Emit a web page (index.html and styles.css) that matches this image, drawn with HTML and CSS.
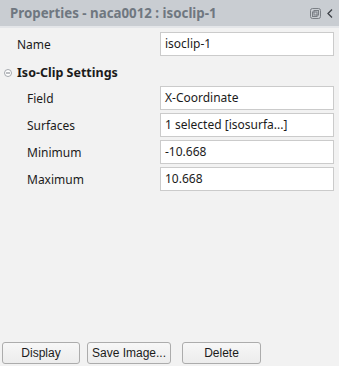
FILE: index.html
```html
<!DOCTYPE html>
<html lang="en">
<head>
  <meta charset="UTF-8" />
  <title>Properties - naca0012 : isoclip-1</title>
  <link rel="stylesheet" href="styles.css">
</head>
<body>
  <div class="panel">
    <!-- 헤더 -->
    <div class="panel-header">
      <span class="panel-title">Properties - naca0012 : isoclip-1</span>
      <span class="header-icons">
        <svg width="11" height="11" viewBox="0 0 11 11">
          <rect x="0.5" y="0.5" width="10" height="10" rx="2" fill="none" stroke="#7a7f85"/>
          <rect x="4" y="2.5" width="4.5" height="4.5" fill="none" stroke="#7a7f85"/>
          <rect x="2.5" y="4" width="4.5" height="4.5" fill="none" stroke="#7a7f85"/>
        </svg>
        <svg width="6" height="9" viewBox="0 0 6 9">
          <path d="M5 0.5 L1 4.5 L5 8.5" fill="none" stroke="#3c4046" stroke-width="1.3"/>
        </svg>
      </span>
    </div>

    <!-- 속성 목록 -->
    <div class="props">
      <div class="row">
        <span class="label">Name</span>
        <div class="value">isoclip-1</div>
      </div>

      <div class="group">
        <svg class="group-toggle" width="8" height="8" viewBox="0 0 8 8">
          <circle cx="4" cy="4" r="3.5" fill="#fff" stroke="#a4a8ad"/>
          <path d="M2 4 H6" stroke="#7a7f85"/>
        </svg>
        <span>Iso-Clip Settings</span>
      </div>

      <div class="row sub">
        <span class="label">Field</span>
        <div class="value">X-Coordinate</div>
      </div>
      <div class="row sub">
        <span class="label">Surfaces</span>
        <div class="value">1 selected [isosurfa...]</div>
      </div>
      <div class="row sub">
        <span class="label">Minimum</span>
        <div class="value">-10.668</div>
      </div>
      <div class="row sub">
        <span class="label">Maximum</span>
        <div class="value">10.668</div>
      </div>
    </div>

    <!-- 하단 버튼 -->
    <div class="actions">
      <button class="btn btn-display">Display</button>
      <button class="btn btn-save">Save Image...</button>
      <button class="btn btn-delete">Delete</button>
    </div>
  </div>
</body>
</html>
```

FILE: styles.css
```css
/* ---------- 기본 ---------- */
body {
  margin: 0;
  font-family: 'Noto Sans', 'Open Sans', sans-serif;
  font-size: 12px;
  color: #1b1b1b;
  background: #f2f2f2;
}

.panel {
  width: 339px;
  height: 366px;
  display: flex;
  flex-direction: column;
  background: #f2f2f2;
}

/* ---------- 헤더 ---------- */
.panel-header {
  height: 26px;
  background: #c9cdd2;
  border-bottom: 2px solid #e4e6e9;
  display: flex;
  align-items: center;
  justify-content: space-between;
  padding: 0 6px 0 10px;
}

.panel-title {
  font-weight: bold;
  font-size: 13.3px;
  color: #6f7780;
}

.header-icons {
  display: flex;
  align-items: center;
  gap: 6px;
}

/* ---------- 속성 ---------- */
.props {
  flex: 1;
  padding-top: 4px;
}

.row {
  display: flex;
  align-items: center;
  height: 24px;
  margin-bottom: 3px;
  padding-left: 17px;
}

.row.sub {
  padding-left: 27px;
}

.label {
  flex: 1;
}

.value {
  width: 168px;
  height: 22px;
  margin-right: 5px;
  background: #fff;
  border: 1px solid #cbcbcb;
  line-height: 22px;
  padding-left: 4px;
}

.group {
  display: flex;
  align-items: center;
  height: 27px;
  padding-left: 4px;
  font-weight: bold;
  font-size: 12.5px;
}

.group-toggle {
  margin-right: 5px;
}

/* ---------- 버튼 ---------- */
.actions {
  display: flex;
  gap: 7px;
  padding: 0 0 2px 2px;
}

.btn {
  height: 22px;
  padding: 0;
  font-family: 'Liberation Sans', Arial, sans-serif;
  font-size: 12px;
  color: #1b1b1b;
  background: linear-gradient(#f7f7f7, #ececec);
  border: 1px solid #acacac;
  border-radius: 3px;
}

.btn-display { width: 78px; }
.btn-save { width: 84px; margin-right: 4px; }
.btn-delete { width: 79px; }
```
